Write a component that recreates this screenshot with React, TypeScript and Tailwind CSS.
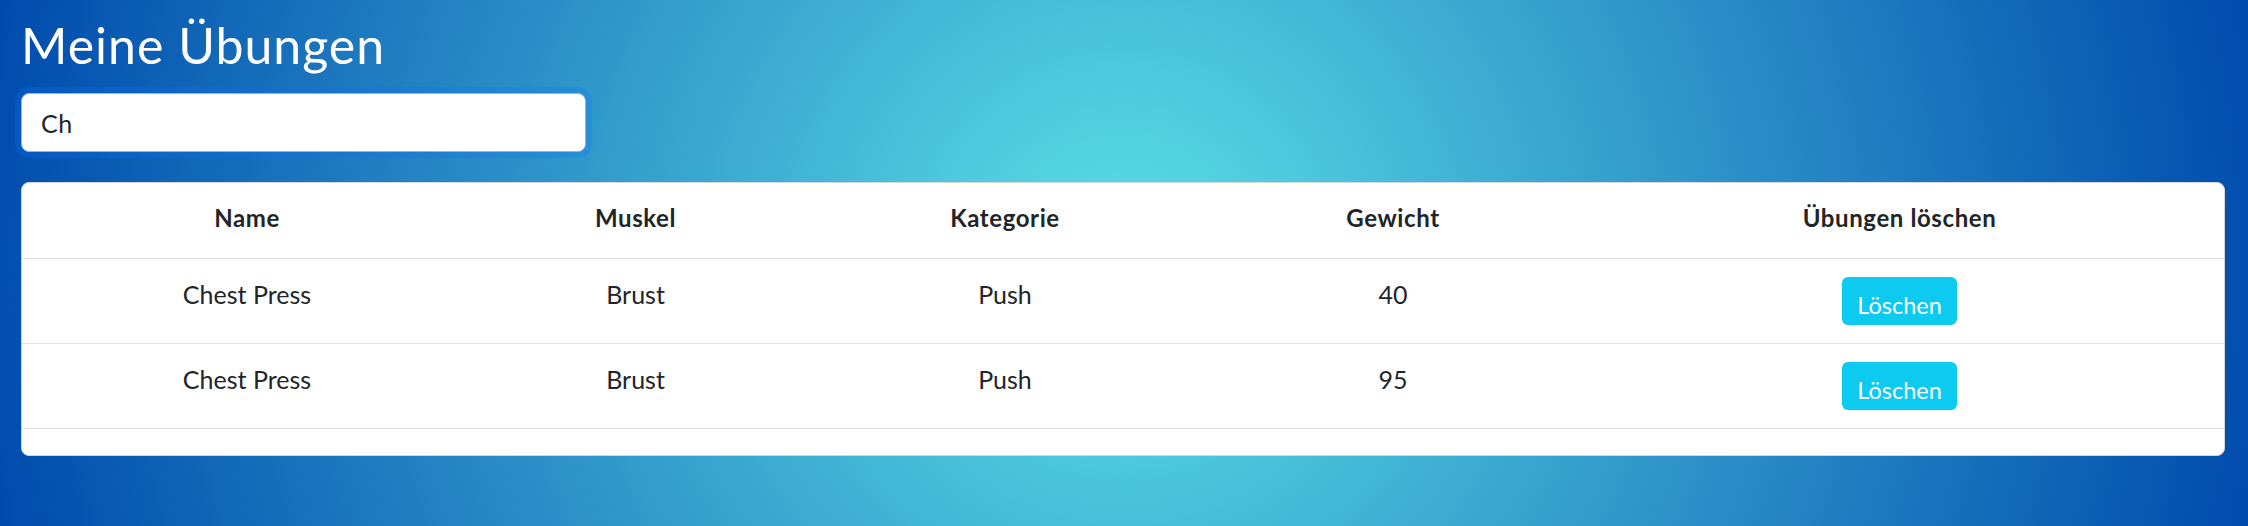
import React from 'react';

type Exercise = { id: number; name: string; muscle: string; category: string; weight: number };

const exercises: Exercise[] = [
  { id: 1, name: 'Chest Press', muscle: 'Brust', category: 'Push', weight: 40 },
  { id: 2, name: 'Chest Press', muscle: 'Brust', category: 'Push', weight: 95 },
];

const headers = ['Name', 'Muskel', 'Kategorie', 'Gewicht', 'Übungen löschen'];

const cols = 'grid grid-cols-[450px_327px_412px_364px_1fr]';

const App: React.FC = () => {
  return (
    <div
      className="min-h-screen h-[526px] w-full bg-[radial-gradient(circle,#5ce1e6_0%,#004aad_100%)] pl-[21px] pr-[23px] text-[#212529]"
      style={{ fontFamily: 'Lato, "Open Sans", sans-serif' }}
    >
      <h1 className="pt-[15px] text-[50px] leading-[60px] font-normal tracking-[1px] text-white">Meine Übungen</h1>

      <input
        type="text"
        defaultValue="Ch"
        className="mt-[18px] block h-[59px] w-[565px] rounded-lg border border-[#86b7fe] bg-white px-[19px] text-[25px] tracking-[0.5px] text-[#212529] outline-none ring-[6px] ring-[#0d6efd]/25"
      />

      <div className="mt-[30px] overflow-hidden rounded-lg border border-[#d6d6d6] bg-white pb-[26px]">
        <div className={`${cols} h-[76px] border-b border-[#dee2e6]`}>
          {headers.map((h) => (
            <div key={h} className="pt-[20px] text-center text-[24px] leading-[29px] font-bold tracking-[0.6px]">
              {h}
            </div>
          ))}
        </div>

        {exercises.map((ex) => (
          <div key={ex.id} className={`${cols} h-[85px] border-b border-[#dee2e6] text-[25px] leading-[30px]`}>
            <div className="pt-[20px] text-center">{ex.name}</div>
            <div className="pt-[20px] text-center">{ex.muscle}</div>
            <div className="pt-[20px] text-center">{ex.category}</div>
            <div className="pt-[20px] text-center">{ex.weight}</div>
            <div className="flex justify-center pt-[18px]">
              <button className="h-[48px] self-start rounded-md bg-[#0dcaf0] px-[15px] pt-[7px] text-[23.5px] leading-[28px] text-white">
                Löschen
              </button>
            </div>
          </div>
        ))}
      </div>
    </div>
  );
};

export default App;
